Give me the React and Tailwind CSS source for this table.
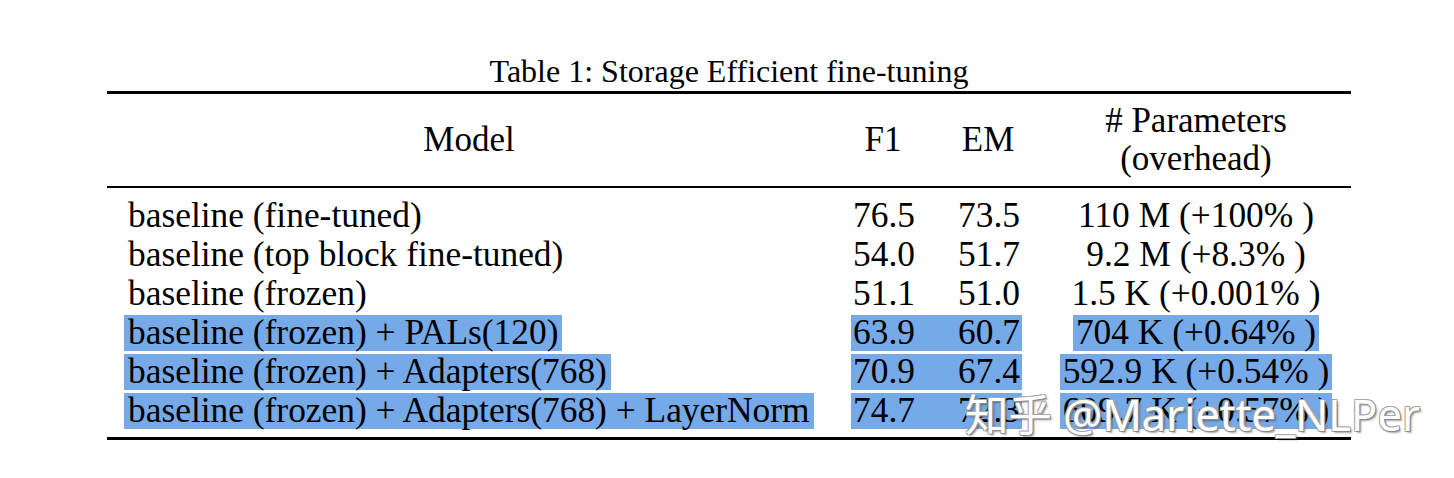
import React from 'react';

const rows = [
  { model: 'baseline (fine-tuned)', f1: '76.5', em: '73.5', params: '110 M (+100% )' },
  { model: 'baseline (top block fine-tuned)', f1: '54.0', em: '51.7', params: '9.2 M (+8.3% )' },
  { model: 'baseline (frozen)', f1: '51.1', em: '51.0', params: '1.5 K (+0.001% )' },
  { model: 'baseline (frozen) + PALs(120)', f1: '63.9', em: '60.7', params: '704 K (+0.64% )', hl: true },
  { model: 'baseline (frozen) + Adapters(768)', f1: '70.9', em: '67.4', params: '592.9 K (+0.54% )', hl: true },
  {
    model: 'baseline (frozen) + Adapters(768) + LayerNorm',
    f1: '74.7',
    em: '72.3',
    params: '609.7 K (+0.57% )',
    hl: true,
  },
];

const serif = { fontFamily: '"Liberation Serif", "Times New Roman", serif' };

const Row = ({ row }) => {
  const bg = row.hl ? 'bg-[#75a9e8]' : '';
  return (
    <div className="grid grid-cols-[724px_104px_106px_310px] h-[36px] leading-[34px] text-[35.4px] text-black">
      <div className="pl-[17px]">
        <span className={`inline-block h-[36px] px-[4px] whitespace-nowrap ${bg}`}>{row.model}</span>
      </div>
      <div className={`ml-[20px] h-[36px] pl-[2px] ${bg}`}>{row.f1}</div>
      <div className={`w-[87px] h-[36px] pl-[23px] ${bg}`}>{row.em}</div>
      <div className="text-center">
        <span className={`inline-block h-[36px] px-[3px] whitespace-nowrap ${bg}`}>{row.params}</span>
      </div>
    </div>
  );
};

export default function App() {
  return (
    <div className="relative w-[1454px] h-[478px] bg-white overflow-hidden" style={serif}>
      <div className="ml-[107px] w-[1244px] pt-[53px]">
        {/* caption */}
        <p className="text-center text-[32px] leading-[36px] text-black">Table 1: Storage Efficient fine-tuning</p>
        <div className="mt-[2px] h-[3px] bg-black" />

        {/* header */}
        <div className="grid grid-cols-[724px_104px_106px_310px] h-[92px] items-center text-[35px] leading-[38px] text-black text-center">
          <div>Model</div>
          <div>F1</div>
          <div>EM</div>
          <div>
            <div># Parameters</div>
            <div>(overhead)</div>
          </div>
        </div>
        <div className="h-[2px] bg-black" />

        {/* body */}
        <div className="flex flex-col gap-[3px] pt-[10px] pb-[8px]">
          {rows.map((r) => (
            <Row key={r.model} row={r} />
          ))}
        </div>
        <div className="h-[3px] bg-black" />
      </div>

      {/* watermark */}
      <div
        className="absolute left-[965px] top-[389px] text-[43.5px] leading-[50px] text-white whitespace-nowrap [text-shadow:1px_1px_0_#8a8a8a,-1px_-1px_0_#a8a8a8,1px_-1px_0_#a8a8a8,-1px_1px_0_#a8a8a8,2px_2px_2px_rgba(0,0,0,0.35)]"
        style={{ fontFamily: '"Noto Sans", "Noto Sans CJK SC", sans-serif' }}
      >
        知乎 @Mariette_NLPer
      </div>
    </div>
  );
}
